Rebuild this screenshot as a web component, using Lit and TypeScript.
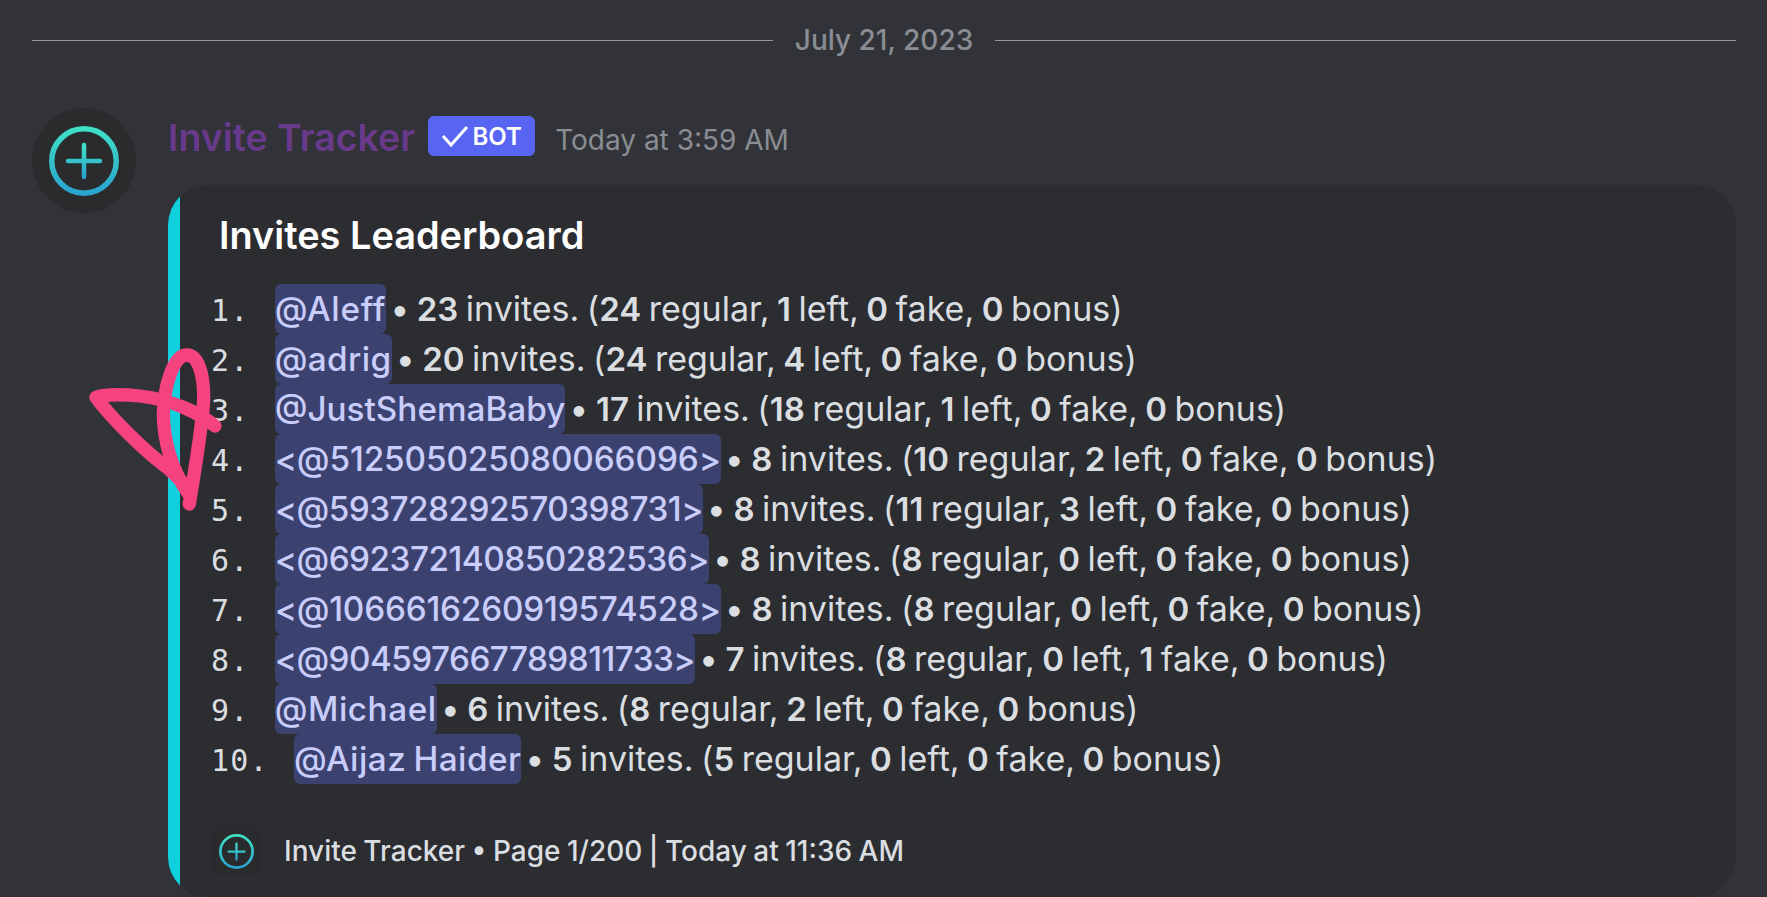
import { LitElement, css, html } from 'lit';
import { customElement } from 'lit/decorators.js';

type Row = {
	who: string;
	track: number;
	total: number;
	regular: number;
	left: number;
	fake: number;
};

const rows: Row[] = [
	{ who: '@Aleff', track: 0.75, total: 23, regular: 24, left: 1, fake: 0 },
	{ who: '@adrig', track: 0.4, total: 20, regular: 24, left: 4, fake: 0 },
	{ who: '@JustShemaBaby', track: 0, total: 17, regular: 18, left: 1, fake: 0 },
	{ who: '<@512505025080066096>', track: -0.1, total: 8, regular: 10, left: 2, fake: 0 },
	{ who: '<@593728292570398731>', track: -0.5, total: 8, regular: 11, left: 3, fake: 0 },
	{ who: '<@692372140850282536>', track: -0.5, total: 8, regular: 8, left: 0, fake: 0 },
	{ who: '<@1066616260919574528>', track: -0.2, total: 8, regular: 8, left: 0, fake: 0 },
	{ who: '<@904597667789811733>', track: -0.55, total: 7, regular: 8, left: 0, fake: 1 },
	{ who: '@Michael', track: 0.55, total: 6, regular: 8, left: 2, fake: 0 },
	{ who: '@Aijaz Haider', track: 0.45, total: 5, regular: 5, left: 0, fake: 0 },
];

const plusIcon = (id: string, stroke: number) => html`
	<svg viewBox="0 0 70 70" fill="none">
		<defs>
			<linearGradient id=${id} x1="0" y1="0" x2="0" y2="1">
				<stop offset="0" stop-color="#3fe0c6"></stop>
				<stop offset="1" stop-color="#2ba3cf"></stop>
			</linearGradient>
		</defs>
		<circle cx="35" cy="35" r=${35 - stroke / 2} stroke="url(#${id})" stroke-width=${stroke}></circle>
		<path d="M35 19V51M19 35H51" stroke="url(#${id})" stroke-width="4.5" stroke-linecap="round"></path>
	</svg>
`;

@customElement('app-root')
export class AppRoot extends LitElement {
	static styles = css`
		:host {
			display: block;
			height: 897px;
			overflow: hidden;
			position: relative;
			background: #313338;
			font-family: 'Inter', sans-serif;
			color: #dbdee1;
		}

		.page {
			padding: 0 31px 0 32px;
		}

		.divider {
			height: 80px;
			display: flex;
			align-items: center;
			gap: 22px;
			color: #8a8d94;
			font-size: 28px;
			font-weight: 500;
			white-space: nowrap;
		}

		.divider i {
			flex: 1;
			height: 1px;
			background: #96979b;
		}

		.message {
			display: flex;
			gap: 32px;
			margin-top: 28px;
		}

		.avatar {
			width: 104px;
			height: 105px;
			flex: none;
			border-radius: 50%;
			background: #2a2b2d;
			display: flex;
			align-items: center;
			justify-content: center;
		}

		.avatar svg {
			width: 70px;
			height: 70px;
		}

		.main {
			flex: 1;
			min-width: 0;
		}

		.head {
			height: 77px;
			display: flex;
			align-items: flex-start;
			white-space: nowrap;
		}

		.name {
			font-size: 37.5px;
			line-height: 48px;
			font-weight: 600;
			color: #693a8c;
			margin-top: 6px;
		}

		.bot {
			margin: 8px 20px 0 13px;
			height: 40px;
			width: 107px;
			box-sizing: border-box;
			border-radius: 6px;
			background: #5865f2;
			color: #fff;
			display: flex;
			align-items: center;
			justify-content: center;
			gap: 3px;
			font-size: 24px;
			font-weight: 600;
		}

		.bot svg {
			width: 28px;
			height: 24px;
		}

		.time {
			font-size: 28px;
			line-height: 48px;
			color: #8a8d94;
			margin-top: 8px;
		}

		.card {
			height: 712px;
			display: flex;
			overflow: hidden;
			background: #2b2d31;
			border-radius: 40px;
		}

		.bar {
			width: 12px;
			flex: none;
			background: #0fd0dc;
		}

		.body {
			flex: 1;
			min-width: 0;
			padding: 25px 40px 0 31px;
		}

		.title {
			margin-left: 8px;
			font-size: 37.9px;
			line-height: 50px;
			font-weight: 600;
			color: #fff;
		}

		.list {
			margin-top: 23px;
			font-size: 34px;
			line-height: 51px;
			word-spacing: -2.1px;
			white-space: nowrap;
		}

		.row {
			height: 50px;
		}

		.num {
			font-family: 'DejaVu Sans Mono', monospace;
			font-size: 30px;
			letter-spacing: 1.2px;
		}

		.mention {
			display: inline-block;
			height: 50px;
			border-radius: 6px;
			background: #3c4270;
			color: #c9cdfb;
			font-size: 33.3px;
			font-weight: 500;
			margin-left: 8px;
		}

		.dot {
			margin-left: 4px;
		}

		b {
			font-size: 33px;
			font-weight: 600;
		}

		.footer {
			margin-top: 43px;
			height: 50px;
			display: flex;
			align-items: center;
			gap: 23px;
			font-size: 28px;
			font-weight: 500;
			word-spacing: -1px;
			white-space: nowrap;
		}

		.footer-icon {
			width: 50px;
			height: 50px;
			background: #2a2b2d;
			display: flex;
			align-items: center;
			justify-content: center;
		}

		.footer-icon svg {
			width: 35px;
			height: 35px;
		}

		.scribble {
			position: absolute;
			left: 60px;
			top: 280px;
			width: 500px;
			height: 280px;
			pointer-events: none;
		}
	`;

	render() {
		return html`
			<div class="page">
				<div class="divider"><i></i>July 21, 2023<i></i></div>
				<div class="message">
					<div class="avatar">${plusIcon('grad-a', 5.5)}</div>
					<div class="main">
						<div class="head">
							<span class="name">Invite Tracker</span>
							<span class="bot">
								<svg viewBox="0 0 28 24" fill="none">
									<path d="M2 12L10 21L26 3" stroke="#fff" stroke-width="3"></path>
								</svg>
								BOT
							</span>
							<span class="time">Today at 3:59 AM</span>
						</div>
						<div class="card">
							<div class="bar"></div>
							<div class="body">
								<div class="title">Invites Leaderboard</div>
								<div class="list">
									${rows.map(
										(r, i) => html`
											<div class="row">
												<span class="num">${i + 1}. </span><span class="mention" style="letter-spacing: ${r.track}px">${r.who}</span><span class="dot">•</span>
												<b>${r.total}</b> invites. (<b>${r.regular}</b> regular, <b>${r.left}</b> left,
												<b>${r.fake}</b> fake, <b>0</b> bonus)
											</div>
										`,
									)}
								</div>
								<div class="footer">
									<div class="footer-icon">${plusIcon('grad-b', 5.5)}</div>
									<span>Invite Tracker • Page 1/200 | Today at 11:36 AM</span>
								</div>
							</div>
						</div>
					</div>
				</div>
			</div>
			<svg class="scribble" viewBox="0 0 1500 840" fill="none">
				<path
					d="M465 438C420 400 340 360 240 348C180 342 130 345 108 352C150 410 250 510 330 570L385 625M388 672C400 600 420 480 430 380C435 300 420 225 380 225C340 225 312 320 310 400C310 480 335 570 385 640"
					stroke="#f5437f"
					stroke-width="40"
					stroke-linecap="round"
					stroke-linejoin="round"
				></path>
			</svg>
		`;
	}
}
